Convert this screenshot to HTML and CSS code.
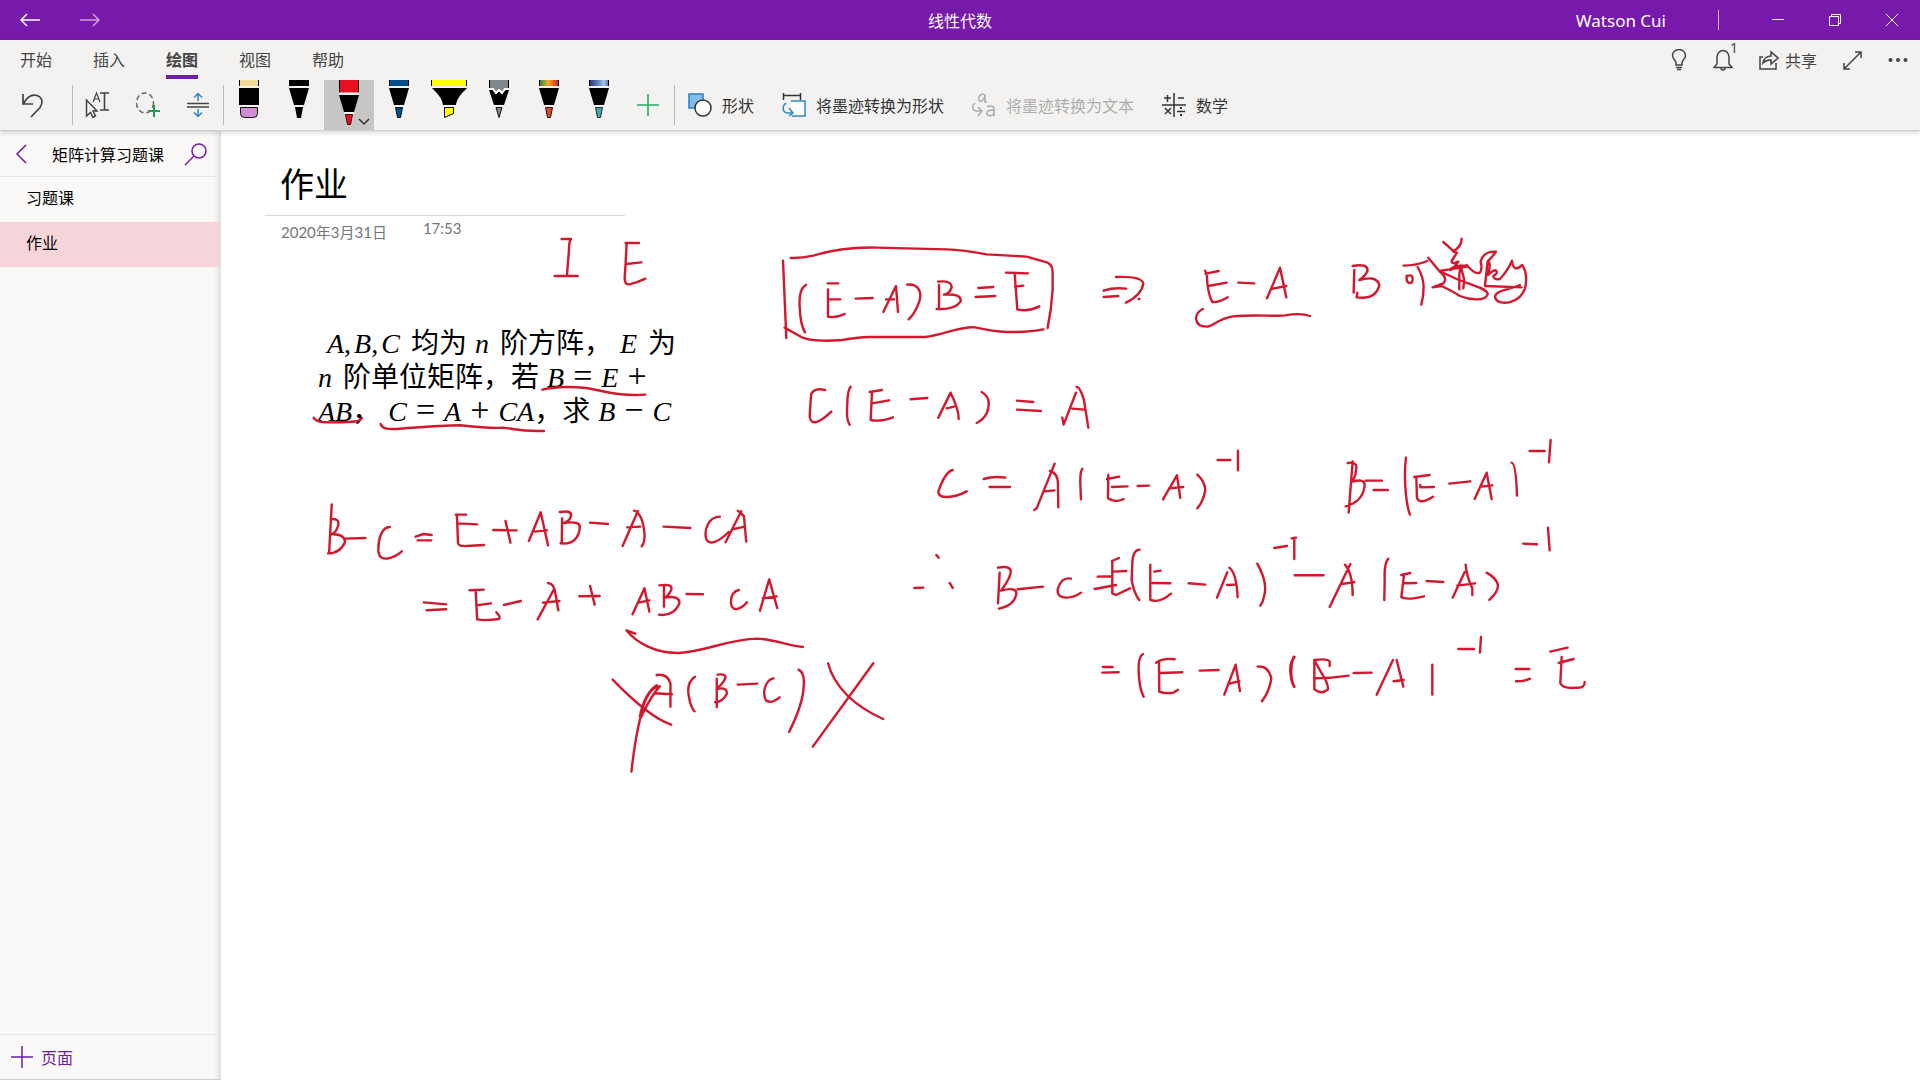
FILE: index.html
```html
<!DOCTYPE html>
<html lang="zh-CN">
<head>
<meta charset="utf-8">
<title>线性代数</title>
<link rel="stylesheet" href="styles.css">
</head>
<body>
<div class="app">
  <header class="titlebar">
    <div class="history">
      <button class="nav-btn" aria-label="后退"><svg width="20" height="14" viewBox="0 0 20 14"><path d="M20 7H1M7 1L1 7l6 6"/></svg></button>
      <button class="nav-btn dim" aria-label="前进"><svg width="20" height="14" viewBox="0 0 20 14"><path d="M0 7h19M13 1l6 6-6 6"/></svg></button>
    </div>
    <div class="notebook">线性代数</div>
    <div class="window">
      <span class="user">Watson Cui</span>
      <span class="bar"></span>
      <button class="win-btn" aria-label="最小化"><svg width="12" height="12" viewBox="0 0 12 12"><path d="M0 5.500h12"/></svg></button>
      <button class="win-btn" aria-label="还原"><svg width="12" height="12" viewBox="0 0 12 12"><path d="M.5 2.500h9v9h-9zM2.500 2.500v-2h9v9h-2"/></svg></button>
      <button class="win-btn" aria-label="关闭"><svg width="12" height="12" viewBox="0 0 12 12"><path d="M0 0l12 12M12 0L0 12"/></svg></button>
    </div>
  </header>

  <div class="ribbon">
    <div class="tabs-row">
      <nav class="tabs">
        <button class="tab">开始</button>
        <button class="tab">插入</button>
        <button class="tab active">绘图</button>
        <button class="tab">视图</button>
        <button class="tab">帮助</button>
      </nav>
      <div class="actions">
        <button class="icon-btn" aria-label="操作说明"><svg width="16" height="22" viewBox="0 0 16 22"><path d="M5 16v-2C5 11 1.500 10 1.500 6.500a6.500 6 0 0 1 13 0C14.500 10 11 11 11 14v2zM5 18.500h6M6 20.500h4"/></svg></button>
        <button class="icon-btn bell" aria-label="通知"><svg width="20" height="22" viewBox="0 0 20 22"><path d="M1 18.500h18l-3-3.500V8a6 6.500 0 0 0-12 0v7zM8 19a2 2 0 0 0 4 0"/></svg><span class="count">1</span></button>
        <button class="icon-btn share"><svg width="20" height="20" viewBox="0 0 20 20"><path d="M4 7H1v12h16v-6M4 13c1-5 4-7 8-7V2l7 6-7 6v-4c-4 0-6 1-8 3z"/></svg>共享</button>
        <button class="icon-btn" aria-label="全屏"><svg width="19" height="19" viewBox="0 0 19 19"><path d="M1 18L18 1M12 1h6v6M1 12v6h6"/></svg></button>
        <button class="icon-btn" aria-label="更多"><svg width="20" height="6" viewBox="0 0 20 6"><g fill="#444" stroke="none"><circle cx="2.500" cy="3" r="2"/><circle cx="10" cy="3" r="2"/><circle cx="17.500" cy="3" r="2"/></g></svg></button>
      </div>
    </div>

    <div class="tools">
      <button class="tool undo" aria-label="撤消"><svg width="24" height="26" viewBox="0 0 24 26"><path d="M2 2v10h10M2.500 11.500C6 5 11 2 16 3.500c6 2 6 8 3 12L10 25" stroke-width="1.700"/></svg></button>
      <span class="sep"></span>
      <button class="tool" aria-label="选择对象或键入文本"><svg width="26" height="30" viewBox="0 0 26 30"><path d="M1.500 10v16l4-3.500 2.500 5 2.500-1.500-2.500-5h4z"/><path d="M15 3h9M15 20h9M19.500 3v17" stroke-width="1.600"/><path d="M8 12l3.500-9L15 12M9.500 9h4" stroke-width="1.200"/></svg></button>
      <button class="tool" aria-label="套索选择"><svg width="26" height="28" viewBox="0 0 26 28"><ellipse cx="10" cy="12" rx="8.500" ry="10" stroke="#666" stroke-dasharray="5 3"/><path d="M19 14v12M13 20h12" stroke="#1f9d55" stroke-width="2"/></svg></button>
      <button class="tool" aria-label="插入空间"><svg width="24" height="26" viewBox="0 0 24 26"><path d="M1 11.500h22M1 15h22" stroke-width="1.600"/><path d="M12 9V2M8 5.500L12 1.500l4 4M12 17v7M8 20.500l4 4 4-4" stroke="#2b88c8"/></svg></button>
      <span class="sep"></span>
      <div class="pens">
        <button class="pen" aria-label="橡皮擦"><svg width="50" height="50" viewBox="0 0 50 50"><path d="M15 0h20v6H15z" fill="#f2dc94"/><path d="M15.500 0v6M34.500 0v6" stroke="#000"/><path d="M15 8h20v17H15z" fill="#000"/><path d="M16.500 27.500h17v6q0 4-4 4h-9q-4 0-4-4z" fill="#d08fd2" stroke="#111"/></svg></button>
        <button class="pen" aria-label="黑色笔"><svg width="50" height="50" viewBox="0 0 50 50"><path d="M15 0h20v6H15zM15 8h20l-5 17H20zM21 27h8l-2 11h-4z" fill="#000"/></svg></button>
        <button class="pen selected" aria-label="红色笔" aria-pressed="true"><svg width="50" height="50" viewBox="0 0 50 50"><path d="M15 0h20v13H15z" fill="#e81123"/><path d="M15.500 0v13M34.500 0v13" stroke="#000"/><path d="M15 13.500h20M20 33h10" stroke="#fff" stroke-width="2"/><path d="M15 15h20l-5 17H20z" fill="#000"/><path d="M21.500 34.500h7l-2 10h-3z" fill="#e81123" stroke="#400"/><path d="M35 39l5 5 5-5" stroke="#333" fill="none" stroke-width="1.500"/></svg></button>
        <button class="pen" aria-label="蓝色笔"><svg width="50" height="50" viewBox="0 0 50 50"><path d="M15 0h20v6H15z" fill="#004e8c"/><path d="M15.500 0v6M34.500 0v6" stroke="#000"/><path d="M15 8h20l-5 17H20z" fill="#000"/><path d="M21.500 27.500h7l-2 10h-3z" fill="#004e8c" stroke="#012"/></svg></button>
        <button class="pen" aria-label="荧光笔"><svg width="50" height="50" viewBox="0 0 50 50"><path d="M7 0h36v6H7z" fill="#ff0"/><path d="M7.500 0v6M42.500 0v6" stroke="#000"/><path d="M8 8h35c-6 6-10 10-11 17H19C18 18 14 14 8 8z" fill="#000"/><path d="M20.500 27.500h9v6l-9 4z" fill="#ff0" stroke="#000"/></svg></button>
        <button class="pen" aria-label="铅笔"><svg width="50" height="50" viewBox="0 0 50 50"><path d="M15 0h20v10l-4-2-3 4-3-3-3 3-3-4-4 2z" fill="#80888c"/><path d="M15.500 0v8M34.500 0v8" stroke="#000"/><path d="M15 10l4 0 3 4 3-3 3 3 3-4h4l-5 15H20z" fill="#000"/><path d="M15 9l4 0 3 4 3-3 3 3 3-4h4" fill="none" stroke="#fff" stroke-width="2"/><path d="M22 27.500h6l-3 10z" fill="#888" stroke="#111"/></svg></button>
        <button class="pen" aria-label="彩虹笔"><svg width="50" height="50" viewBox="0 0 50 50"><defs><linearGradient id="rainbow"><stop offset="0" stop-color="#20813a"/><stop offset=".45" stop-color="#f0b020"/><stop offset=".75" stop-color="#e85a24"/><stop offset="1" stop-color="#c3232f"/></linearGradient></defs><path d="M15 0h20v6H15z" fill="url(#rainbow)"/><path d="M15.500 0v6M34.500 0v6" stroke="#000"/><path d="M15 8h20l-5 17H20z" fill="#000"/><path d="M21.500 27.500h7l-2 10h-3z" fill="#c9512b" stroke="#311"/></svg></button>
        <button class="pen" aria-label="银河笔"><svg width="50" height="50" viewBox="0 0 50 50"><defs><linearGradient id="galaxy"><stop offset="0" stop-color="#2c2c66"/><stop offset=".4" stop-color="#5a74b8"/><stop offset=".75" stop-color="#9ccbe6"/><stop offset="1" stop-color="#6b5a9c"/></linearGradient></defs><path d="M15 0h20v6H15z" fill="url(#galaxy)"/><path d="M15.500 0v6M34.500 0v6" stroke="#000"/><path d="M15 8h20l-5 17H20z" fill="#000"/><path d="M21.500 27.500h7l-2 10h-3z" fill="#45a5ad" stroke="#133"/></svg></button>
        <button class="pen" aria-label="添加笔"><svg width="50" height="50" viewBox="0 0 50 50"><path d="M24 14v22M13 25h22" stroke="#27ae60" stroke-width="1.600"/></svg></button>
      </div>
      <span class="sep"></span>
      <div class="commands">
        <button class="command"><svg width="24" height="24" viewBox="0 0 24 24"><path d="M1 1h14v14H1z" fill="#83bdec" stroke="#2b7cc0"/><circle cx="15" cy="15" r="8" fill="#fff"/></svg>形状</button>
        <button class="command"><svg width="24" height="24" viewBox="0 0 24 24"><path d="M1.500 0v7M18.500 0v7M1 2.500h18"/><path d="M9 8h14v15H10" fill="#fff" stroke="#2b88c8"/><path d="M4 10c-4 3-4 9 1 10h5M7 15l4 5-4 3" stroke="#2b88c8"/></svg>将墨迹转换为形状</button>
        <button class="command" disabled><svg width="24" height="24" viewBox="0 0 24 24"><path d="M13 2c-4-2-7 1-6 5 1 3 5 1 6-5l0 7 2 0M3 10c-4 3-2 8 1 8h5M6 14l4 4-4 5M15 14c3-2 7-1 7 2v7M22 17c-5 0-8 1-7 4s6 2 7-1" stroke="#aaa"/></svg>将墨迹转换为文本</button>
        <button class="command"><svg width="24" height="24" viewBox="0 0 24 24"><path d="M12 0v24M0 12h24M2 5h7M5.500 2v7M16 5h6M3 15l6 6M9 15l-6 6M15 18.500h8"/><path d="M19 14v2M19 21v2" stroke-width="2"/></svg>数学</button>
      </div>
    </div>
  </div>

  <div class="body">
    <aside class="sidebar">
      <div class="section-head">
        <button class="plain" aria-label="返回"><svg width="12" height="20" viewBox="0 0 12 20"><path d="M11 1L2 10l9 9"/></svg></button>
        <span class="section-name">矩阵计算习题课</span>
        <button class="plain" aria-label="搜索"><svg width="24" height="24" viewBox="0 0 24 24"><circle cx="15" cy="9" r="7"/><path d="M10 14L1 23"/></svg></button>
      </div>
      <nav class="pages">
        <a class="page-link" href="#page1">习题课</a>
        <a class="page-link current" href="#page2">作业</a>
      </nav>
      <button class="add-page"><svg width="22" height="22" viewBox="0 0 22 22"><path d="M11 0v22M0 11h22"/></svg>页面</button>
    </aside>

    <main class="canvas">
      <div class="page-head">
        <h1 class="page-title">作业</h1>
        <div class="stamp"><span class="date">2020年3月31日</span><span class="time">17:53</span></div>
      </div>
      <div class="problem">
        <div class="line first"><i>A</i><b>,</b><i>B</i><b>,</b><i>C</i> 均为 <i>n</i> 阶方阵， <i>E</i> 为</div>
        <div class="line"><i>n</i> 阶单位矩阵，若 <i>B</i><s>=</s><i>E</i><s>+</s></div>
        <div class="line"><i class="tight">AB</i>， <i>C</i><s>=</s><i>A</i><s>+</s><i class="tight">CA</i>，求 <i>B</i><s>−</s><i>C</i></div>
      </div>

      <svg class="ink" width="1699" height="949" viewBox="221 131 1699 949" aria-label="手写笔迹">
        <!-- symbols and underlines around the problem statement -->
        <g transform="translate(220 150) scale(.3333)">
          <path d="M1025 267H1053Q1047 275 1047 300L1041 376M1004 378H1073"/>
          <path d="M1217 279H1257M1220 280L1217 340L1214 385Q1215 405 1228 403Q1250 399 1276 386M1219 342L1264 337"/>
          <path d="M967 719C1010 708 1060 710 1100 714C1150 722 1190 739 1276 734"/>
          <path d="M281 803C290 820 320 817 350 817C400 817 420 815 426 804"/>
          <path d="M482 822C487 836 500 838 530 837C600 832 660 826 720 826C770 830 800 836 850 833C890 838 900 845 972 843"/>
        </g>
        <!-- boxed equation and C(E-A)=A -->
        <g transform="translate(760 220) scale(.3333)">
          <path d="M69 122L79 354M92 114Q125 115 160 107Q250 80 350 83L560 88Q610 90 680 103L800 110L850 124Q878 128 878 155V210Q874 270 863 324"/>
          <path d="M74 323L120 349Q145 366 240 361Q290 352 330 351H495C550 345 600 318 645 322Q700 334 740 336Q810 337 850 328"/>
          <path d="M138 194C120 205 117 230 119 260Q121 315 135 337M203 190H235M204 208V290Q225 295 254 282M205 238H241M287 236L338 234M370 276L408 198L414 276M378 238H402M441 194C478 190 487 220 477 247Q465 280 446 298M537 195V266M534 185Q575 180 575 202Q570 220 552 224Q605 220 602 244Q585 270 530 267M655 204L700 201M647 231L706 228M738 158L804 160M764 160L772 268Q805 276 838 259M765 200L790 197"/>
          <path d="M1068 171Q1145 168 1150 190Q1145 225 1098 248M1031 212Q1060 202 1099 206M1031 231L1075 228M1136 237h2"/>
          <path d="M195 510Q160 502 153 525L149 590Q155 630 214 575M272 500Q263 510 262 550Q258 600 269 614M329 516L366 510M336 516L332 600Q360 606 399 592M336 550L387 541M452 538L502 534M535 593L572 518Q597 570 596 597M560 565L582 560M665 516C690 530 690 555 680 580Q670 600 650 609M771 542L820 546M771 569L843 573M950 501Q960 500 972 540L985 623M948 518L911 614L907 593M937 566L973 569"/>
        </g>
        <!-- E-A, B invertible -->
        <g transform="translate(1080 220) scale(.3333)">
          <path d="M375 152Q382 162 382 190Q387 230 397 246Q415 249 443 232M377 161L416 153M385 198L440 188M475 188L523 190M561 235L600 143L619 232M579 206L619 198"/>
          <path d="M369 267Q350 275 348 295Q350 320 380 320C400 320 410 297 460 289C530 283 580 290 615 286C650 280 670 280 690 288"/>
          <path d="M823 150L821 218M818 138Q862 130 863 150Q860 165 838 180Q890 165 898 195Q888 240 830 232L832 218"/>
          <path d="M971 137Q1010 136 1042 123M980 168Q978 195 996 187Q1004 160 980 168M1013 141Q1030 170 1031 200Q1031 230 1024 254"/>
          <path d="M1090 66L1119 92M1145 56Q1145 80 1119 94L1131 98L1115 123Q1115 135 1135 125Q1115 155 1108 149Q1125 135 1153 137M1045 113L1078 153Q1105 175 1090 190L1058 202L1085 198Q1120 215 1140 228C1170 240 1215 245 1223 223C1225 205 1160 190 1130 177L1078 153L1160 140M1138 208V165L1142 137L1153 180L1150 205M1160 135Q1185 165 1200 158Q1208 145 1202 125Q1210 93 1248 95Q1240 108 1223 124L1215 198L1325 202M1223 124Q1235 125 1224 165Q1240 150 1248 151Q1255 160 1240 168Q1240 180 1260 177Q1285 150 1296 122Q1300 160 1327 135Q1345 165 1335 205C1320 250 1260 260 1246 235C1240 210 1290 210 1320 195"/>
        </g>
        <!-- expansion of B-C -->
        <g transform="translate(300 490) scale(.3827 .3333)">
          <path d="M83 43L76 190M80 87Q104 85 100 105Q95 130 80 133Q115 130 118 155Q105 190 73 190M116 146L171 144M235 111C215 110 203 145 205 185C208 220 245 205 266 184M302 140L323 132L344 135M307 151H343"/>
          <path d="M407 74H434M410 76L413 160Q415 170 435 168L481 165M412 100L463 103M505 120L566 121M537 93L550 158M598 153L629 67L648 166M613 125L645 121M685 85L684 158M679 66Q712 60 708 78Q705 95 685 100Q735 90 731 115Q725 165 681 160M758 98L805 102M843 168L883 63M873 62Q895 70 900 130Q902 155 893 169M855 112L889 110M950 110L1020 114M1097 80C1070 80 1055 115 1061 145C1068 170 1095 155 1120 126M1112 157L1153 64M1144 62L1160 78L1166 155M1130 118L1162 110"/>
          <path d="M324 337L382 343M331 361L382 358M443 301L480 299M459 303L463 388Q485 393 520 387Q525 380 513 367M461 346L499 340M533 345L577 333M621 388L664 297M648 279Q665 280 668 315L675 361M635 338L678 333M730 319L783 318M758 288L770 344M869 373L900 295L913 365M884 338L913 331M951 287V350M939 286Q975 280 970 300Q962 320 951 323Q995 315 991 342Q975 380 938 374M1010 312L1053 313M1147 300Q1125 305 1126 340C1130 370 1155 355 1168 337M1202 362L1226 268L1247 354M1209 325L1245 319"/>
          <path d="M876 431L853 421C880 460 930 490 990 489C1060 485 1120 447 1195 446C1240 448 1270 466 1314 471M817 569C860 620 920 685 970 704M866 845Q875 750 890 680C900 620 920 590 940 589C915 620 905 650 890 684M888 680Q900 610 932 586M932 555Q960 550 968 580V650M927 610L972 613M1032 560C1012 575 1012 600 1017 625Q1022 655 1031 664M1089 566V651M1091 554Q1118 550 1110 568Q1105 580 1089 597Q1118 590 1115 612Q1105 635 1085 637M1144 584L1195 581M1237 565C1215 570 1207 610 1218 632C1230 640 1245 630 1253 622M1303 539Q1320 550 1316 590Q1315 640 1278 726M1380 520C1395 590 1450 650 1524 687M1498 520L1340 770"/>
        </g>
        <!-- solving for C and substituting -->
        <g transform="translate(900 430) scale(.3333)">
          <path d="M158 120C140 125 125 155 115 185C115 208 160 205 200 184M251 147Q280 138 316 143M269 171H330M464 101L410 235L403 240M450 123Q475 130 474 165L475 232M434 184L463 181M547 116Q540 125 541 160L543 208M621 147L658 140M625 134L624 205Q645 220 671 207M636 171L683 169M713 168L747 167M789 208L831 136L841 204M807 175L850 171M892 134Q915 155 916 180Q910 215 892 235M953 90H991M1014 62V121"/>
          <path d="M109 375L116 383M43 474L70 473M149 459L158 474M299 428L294 520M294 413Q335 405 332 428Q328 450 303 482Q350 470 349 490Q345 525 297 536M353 478L429 470M513 446Q485 440 474 475C465 515 520 505 543 488M593 440L636 439M584 477L648 465M636 393L657 384M637 393V490L648 495L690 475M640 425L679 423M719 359Q698 360 697 400L695 450Q702 490 718 510M751 404V510Q780 520 813 491M763 425L782 422M757 459L811 460M866 460L916 464M951 503L982 427M988 413Q1010 430 1013 502M981 465L1005 464M1072 401Q1105 460 1092 500Q1090 515 1081 527M1123 354L1161 348M1175 325L1188 323M1183 324V387"/>
          <path d="M609 711H638M607 728L656 727M729 672Q712 680 717 740Q720 780 731 800M777 693L778 785Q795 792 820 788L834 779M768 698Q790 683 824 688M782 729L847 727M899 722L956 720M973 794L1007 704L1020 783M989 761L1018 753M1073 710Q1105 705 1114 745Q1110 780 1086 814M1184 681Q1165 700 1173 740Q1175 760 1183 770"/>
        </g>
        <!-- inverse of E-A and the final result -->
        <g transform="translate(1280 420) scale(.3333)">
          <path d="M218 124L206 278M203 129Q232 125 229 145Q228 165 218 185Q255 175 254 195Q250 245 197 259M257 182H306M281 210H324M378 113Q373 150 376 200Q380 260 390 284M403 171L449 165M409 173L411 235Q420 255 459 230M421 195V202L462 201M508 191L571 184M584 237L620 158L635 237M603 200L637 196M695 128Q708 130 711 227M749 93H794M812 60L807 127"/>
          <path d="M44 466H131M149 561L211 432M195 434Q218 460 218 525M186 492L223 486M325 416Q312 430 314 480L313 540M364 465L391 459M372 465L364 532Q380 541 432 529M373 490L409 489M440 483L490 486M518 533L554 456M557 434Q560 470 577 505V525M532 497L585 490M620 458Q650 475 654 495Q655 515 628 540M730 371L771 373M804 323L809 391"/>
          <path d="M41 710C30 740 32 780 43 800M103 720V808Q125 825 144 808Q145 790 125 760L103 720Q145 715 149 725V738M106 775Q155 775 206 767M221 759L275 758M290 824L339 720M350 720L370 800M341 784L371 780M457 734V824M535 687H582M603 651L600 698M707 747H748M708 784Q735 784 750 776M811 695L863 683M845 711L841 790Q850 808 890 803Q915 805 914 786M836 729L881 717"/>
        </g>
      </svg>
    </main>
  </div>
</div>
</body>
</html>
```
FILE: styles.css
```css
* { box-sizing: border-box; }
body {
  margin: 0;
  font-family: "Noto Sans", "Noto Sans CJK SC", sans-serif;
  font-size: 16px;
  color: #444;
}
button {
  margin: 0;
  padding: 0;
  border: 0;
  background: none;
  font: inherit;
  color: inherit;
}
svg {
  display: block;
  flex: none;
  fill: none;
  stroke: currentColor;
  stroke-width: 1.5;
}
.app {
  display: flex;
  flex-direction: column;
  min-height: 100vh;
}

/* title bar */
.titlebar {
  display: grid;
  grid-template-columns: 1fr auto 1fr;
  align-items: center;
  height: 40px;
  background: #7719aa;
  color: #fff;
}
.history { display: flex; gap: 40px; padding-left: 20px; }
.dim { opacity: .6; }
.window { display: flex; align-items: center; justify-content: flex-end; }
.user { margin-right: 52px; font-size: 17px; }
.bar { width: 1px; height: 20px; margin-right: 30px; background: #d6b3e8; }
.win-btn { display: flex; justify-content: center; width: 57px; }
.win-btn svg { stroke-width: 1; }

/* ribbon */
.ribbon {
  position: relative;
  z-index: 2;
  background: #f3f2f1;
  border-bottom: 1px solid #cfcfcf;
  box-shadow: 0 2px 5px rgba(0, 0, 0, .15);
}
.tabs-row { display: flex; justify-content: space-between; height: 40px; }
.tabs { display: flex; gap: 41px; padding-left: 20px; }
.tab { height: 39px; line-height: 30px; padding-top: 5px; border-bottom: 4px solid transparent; }
.tab.active { font-weight: 700; border-bottom-color: #6b1f9c; }
.actions { display: flex; align-items: center; gap: 26px; padding-right: 12px; }
.icon-btn { display: flex; align-items: center; }
.bell { position: relative; }
.count { position: absolute; left: 17px; top: -11px; font-size: 14px; }
.share { gap: 6px; }
.tools { display: flex; align-items: center; height: 50px; }
.tool { display: flex; justify-content: center; width: 50px; }
.undo { justify-content: flex-start; width: 72px; padding-left: 21px; }
.sep { width: 1px; height: 40px; background: #b9b9bd; }
.pens { display: flex; }
.pen { width: 50px; height: 50px; }
.pen svg { stroke: none; stroke-width: 1; }
.selected { background: #c8c6c4; }
.commands { display: flex; gap: 28px; padding-left: 13px; }
.command { display: flex; align-items: center; gap: 10px; color: #333; }
.command:disabled { color: #b0aeac; }

/* page list */
.body { display: flex; flex: 1; }
.sidebar {
  display: flex;
  flex-direction: column;
  width: 221px;
  background: #faf9f8;
  border-right: 1px solid #dedede;
  box-shadow: inset -6px 0 6px -4px rgba(0, 0, 0, .12);
  color: #000;
}
.section-head {
  display: flex;
  align-items: center;
  height: 46px;
  padding-left: 15px;
  border-bottom: 1px solid #e8e6e5;
}
.section-name { margin: 0 20px 0 25px; }
.plain { color: #7719aa; }
.pages { flex: 1; }
.page-link { display: block; height: 45px; padding-left: 26px; line-height: 43px; color: #000; text-decoration: none; }
.current { background: #f5d5d9; }
.add-page {
  display: flex;
  align-items: center;
  gap: 8px;
  height: 46px;
  padding-left: 11px;
  border-top: 1px solid #e8e6e5;
  border-bottom: 1px solid #cfcfcf;
  color: #6b1f9c;
}

/* note page */
.canvas { position: relative; flex: 1; min-width: 0; overflow: hidden; background: #fff; color: #000; }
.page-head { width: 360px; margin-left: 44px; padding-top: 28px; }
.page-title {
  margin: 0;
  height: 57px;
  padding-left: 15px;
  border-bottom: 1px solid #d8d8d8;
  font-size: 34px;
  font-weight: 400;
  line-height: 50px;
}
.stamp {
  display: flex;
  gap: 36px;
  padding: 4px 0 0 16px;
  font-family: Lato, "Noto Sans CJK SC", sans-serif;
  font-size: 15px;
  line-height: 24px;
  color: #767676;
}
.time { line-height: 16px; }
.problem { padding: 83px 0 0 96px; }
.line { height: 34px; font-family: "Liberation Serif", "Noto Sans CJK SC", serif; font-size: 28px; line-height: 34px; white-space: nowrap; }
.first { padding-left: 9px; }
.line i { margin: 0 4px 0 1px; }
.line .tight { margin-right: 0; }
.line b { margin: 0 2px 0 -4px; font-weight: 400; }
.line s { margin: 0 8px 0 5px; font-size: 34px; line-height: 28px; text-decoration: none; }
.ink { position: absolute; top: 0; left: 0; }
.ink path { stroke: #d3182e; stroke-width: 2.4; stroke-linecap: round; stroke-linejoin: round; vector-effect: non-scaling-stroke; }
```
